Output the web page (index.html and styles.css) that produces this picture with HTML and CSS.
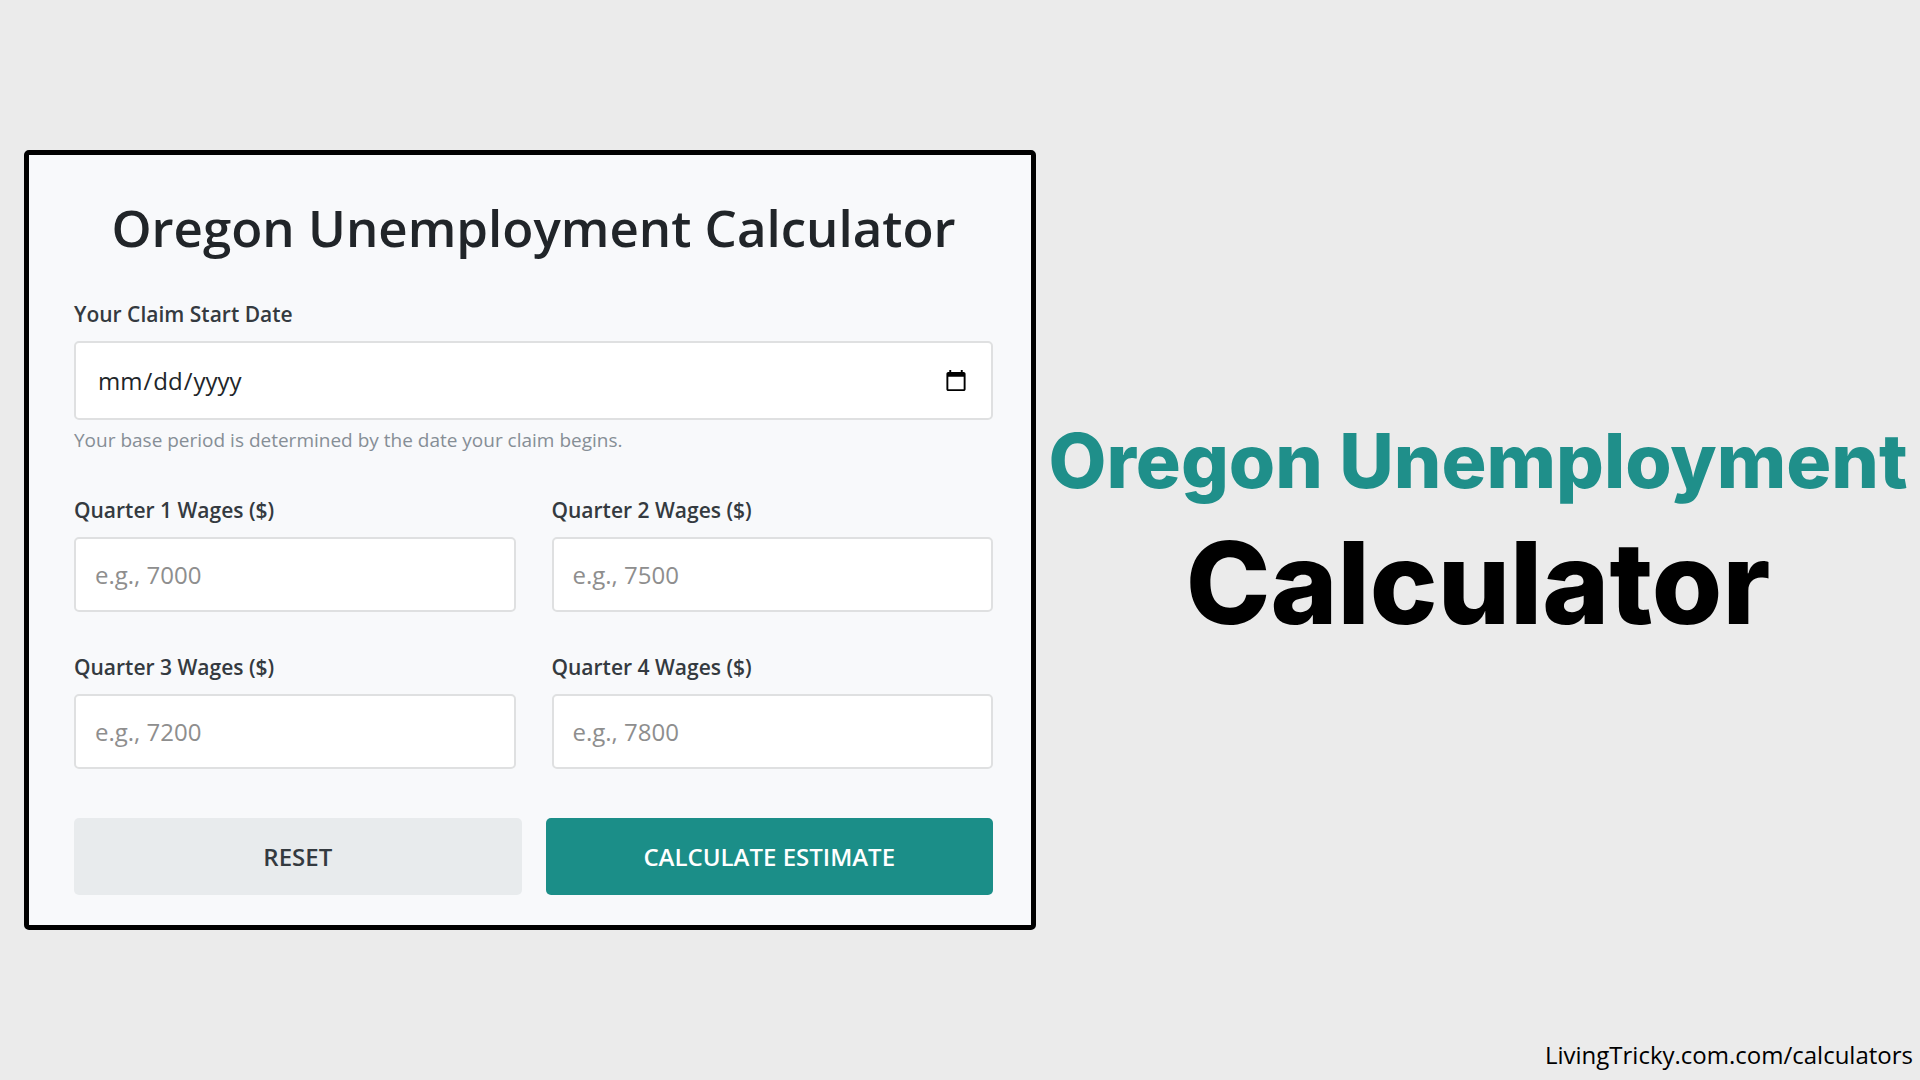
FILE: index.html
```
<!DOCTYPE html>
<html lang="en">
<head>
    <meta charset="UTF-8">
    <meta name="viewport" content="width=device-width, initial-scale=1.0">
    <title>Oregon Unemployment Calculator</title>
    <link rel="stylesheet" href="styles.css">
</head>
<body>

    <main class="hero">
        <!-- CALCULATOR FORM -->
        <form class="card">
            <h2 class="card-title">Oregon Unemployment Calculator</h2>

            <div class="field">
                <label for="claim-date">Your Claim Start Date</label>
                <input type="date" id="claim-date" class="date-input">
                <p class="help">Your base period is determined by the date your claim begins.</p>
            </div>

            <div class="quarters">
                <div class="field">
                    <label for="q1">Quarter 1 Wages ($)</label>
                    <input type="text" inputmode="decimal" id="q1" placeholder="e.g., 7000">
                </div>
                <div class="field">
                    <label for="q2">Quarter 2 Wages ($)</label>
                    <input type="text" inputmode="decimal" id="q2" placeholder="e.g., 7500">
                </div>
                <div class="field">
                    <label for="q3">Quarter 3 Wages ($)</label>
                    <input type="text" inputmode="decimal" id="q3" placeholder="e.g., 7200">
                </div>
                <div class="field">
                    <label for="q4">Quarter 4 Wages ($)</label>
                    <input type="text" inputmode="decimal" id="q4" placeholder="e.g., 7800">
                </div>
            </div>

            <div class="actions">
                <button type="reset" class="btn btn-reset">RESET</button>
                <button type="button" class="btn btn-calc">CALCULATE ESTIMATE</button>
            </div>
        </form>

        <!-- HEADLINE -->
        <h1 class="headline">
            <span class="headline-top">Oregon Unemployment</span>
            <span class="headline-main">Calculator</span>
        </h1>
    </main>

    <footer class="footer">
        <a href="#">LivingTricky.com.com/calculators</a>
    </footer>

</body>
</html>
```
FILE: styles.css
```
* { margin: 0; padding: 0; box-sizing: border-box; }

body {
    min-height: 100vh;
    display: grid;
    grid-template-rows: 1fr auto 1fr;
    background: #ebebeb;
    color: #212529;
    font-family: 'Open Sans', 'Noto Sans', sans-serif;
}

.hero {
    grid-row: 2;
    display: grid;
    grid-template-columns: 1012fr 884fr;
    align-items: center;
    padding-left: 24px;
}

/* Form card */
.card {
    padding: 40px 38px 30px 45px;
    background: #f8f9fb;
    border: 5px solid #000;
    border-radius: 5px;
}

.card-title {
    margin-bottom: 40px;
    font-size: 51px;
    font-weight: 600;
    line-height: 64px;
    text-align: center;
    white-space: nowrap;
}

label {
    display: block;
    margin-bottom: 12px;
    color: #343a40;
    font-size: 21px;
    font-weight: 600;
    line-height: 30px;
}

input {
    display: block;
    width: 100%;
    height: 75px;
    padding: 0 19px;
    background: #fff;
    border: 2px solid #dfe0e1;
    border-radius: 5px;
    color: #212529;
    font-family: inherit;
    font-size: 24px;
}

input::placeholder {
    color: #8e8e8e;
}

.date-input {
    height: 79px;
    padding: 0 21px;
}

.help {
    margin-top: 6px;
    color: #868e96;
    font-size: 19px;
    line-height: 28px;
}

.quarters {
    display: grid;
    grid-template-columns: 1fr 1fr;
    gap: 40px 36px;
    margin-top: 41px;
}

.actions {
    display: grid;
    grid-template-columns: 1fr 1fr;
    gap: 24px;
    margin-top: 49px;
}

.btn {
    height: 77px;
    border: none;
    border-radius: 5px;
    font-family: inherit;
    font-size: 24px;
    font-weight: 600;
    cursor: pointer;
}

.btn-reset {
    background: #e8ebed;
    color: #343a40;
}

.btn-calc {
    background: #1b8e88;
    color: #fff;
}

/* Headline */
.headline {
    display: flex;
    flex-direction: column;
    align-items: center;
    gap: 12px;
    padding-bottom: 26px;
    font-family: Inter, sans-serif;
    white-space: nowrap;
}

.headline-top {
    color: #1f8f8a;
    font-size: 75px;
    font-weight: 800;
    line-height: 100px;
}

.headline-main {
    color: #000;
    font-size: 114px;
    font-weight: 800;
    line-height: 120px;
}

/* Footer */
.footer {
    grid-row: 3;
    align-self: end;
    padding: 0 7px 8px 0;
    text-align: right;
}

.footer a {
    color: #000;
    font-size: 24px;
    line-height: 34px;
    text-decoration: none;
}
```
